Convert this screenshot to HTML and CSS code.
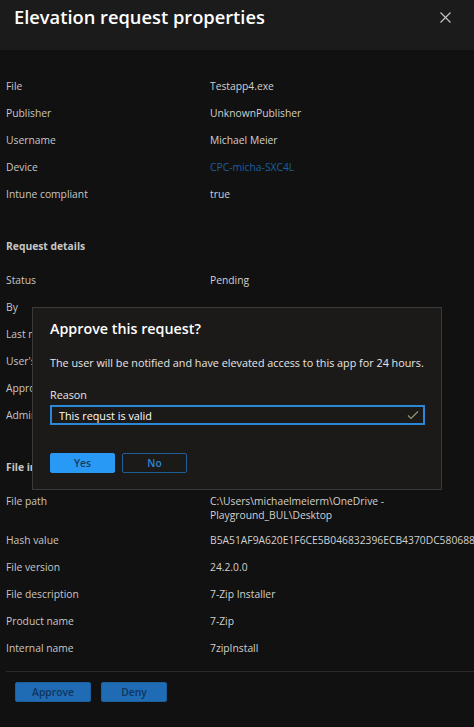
FILE: index.html
```html
<!DOCTYPE html>
<html lang="en">
<head>
    <meta charset="UTF-8">
    <title>Elevation request properties</title>
    <link rel="stylesheet" href="styles.css">
</head>
<body>
    <header class="panel-header">
        <h1>Elevation request properties</h1>
        <button class="close-btn" aria-label="Close">
            <svg width="11" height="11" viewBox="0 0 11 11"><path d="M0.5 0.5L10.5 10.5M10.5 0.5L0.5 10.5" stroke="#c8c8c8" stroke-width="1.1"/></svg>
        </button>
    </header>
    <main class="panel-body">
        <div class="row"><span class="label">File</span><span class="value">Testapp4.exe</span></div>
        <div class="row"><span class="label">Publisher</span><span class="value">UnknownPublisher</span></div>
        <div class="row"><span class="label">Username</span><span class="value">Michael Meier</span></div>
        <div class="row"><span class="label">Device</span><a class="value link">CPC-micha-SXC4L</a></div>
        <div class="row"><span class="label">Intune compliant</span><span class="value">true</span></div>

        <h2 class="section-title">Request details</h2>
        <div class="row"><span class="label">Status</span><span class="value">Pending</span></div>
        <div class="row"><span class="label">By</span><span class="value"></span></div>
        <div class="row"><span class="label">Last modified</span><span class="value"></span></div>
        <div class="row"><span class="label">User's justification</span><span class="value"></span></div>
        <div class="row"><span class="label">Approver</span><span class="value"></span></div>
        <div class="row"><span class="label">Admin comment</span><span class="value"></span></div>

        <h2 class="section-title">File info</h2>
        <div class="row row-tall"><span class="label">File path</span><span class="value">C:\Users\michaelmeierm\OneDrive -<br>Playground_BUL\Desktop</span></div>
        <div class="row"><span class="label">Hash value</span><span class="value">B5A51AF9A620E1F6CE5B046832396ECB4370DC5806885E</span></div>
        <div class="row"><span class="label">File version</span><span class="value">24.2.0.0</span></div>
        <div class="row"><span class="label">File description</span><span class="value">7-Zip Installer</span></div>
        <div class="row"><span class="label">Product name</span><span class="value">7-Zip</span></div>
        <div class="row"><span class="label">Internal name</span><span class="value">7zipInstall</span></div>
    </main>
    <footer class="panel-footer">
        <button class="btn btn-muted approve">Approve</button>
        <button class="btn btn-muted deny">Deny</button>
    </footer>

    <div class="dialog">
        <h3>Approve this request?</h3>
        <p>The user will be notified and have elevated access to this app for 24 hours.</p>
        <label class="field-label">Reason</label>
        <div class="text-field">
            <span>This requst is valid</span>
            <svg width="12" height="10" viewBox="0 0 12 10"><path d="M1 5.5L4 8.5L11 1.5" fill="none" stroke="#8e9a72" stroke-width="1.2"/></svg>
        </div>
        <div class="dialog-actions">
            <button class="btn btn-primary">Yes</button>
            <button class="btn btn-outline">No</button>
        </div>
    </div>
</body>
</html>
```

FILE: styles.css
```css
body {
    margin: 0;
    background: #111111;
    color: #d0d0d0;
    font-family: "Open Sans", "Noto Sans", sans-serif;
    font-size: 10.3px;
    width: 474px;
    height: 727px;
    overflow: hidden;
    position: relative;
}

.panel-header {
    height: 50px;
    background: #1b1b1b;
    display: flex;
    align-items: flex-start;
    justify-content: space-between;
}

.panel-header h1 {
    margin: 0;
    padding: 3px 0 0 14px;
    font-size: 18.3px;
    font-weight: 600;
    color: #ffffff;
    line-height: 28px;
}

.close-btn {
    background: none;
    border: none;
    padding: 0;
    margin: 12px 23px 0 0;
    width: 11px;
    height: 11px;
    display: flex;
}

.panel-body {
    padding: 22px 0 0 6px;
    overflow: hidden;
}

.row {
    display: flex;
    padding: 6.5px 0;
    line-height: 14px;
}

.row-tall {
    padding-bottom: 5px;
}

.label {
    width: 204px;
    flex-shrink: 0;
    color: #c8c6c4;
    white-space: nowrap;
}

.value {
    white-space: nowrap;
    color: #d2d0ce;
}

.link {
    color: #1c5f9e;
}

.section-title {
    margin: 26px 0 6px;
    font-size: 10.3px;
    font-weight: 700;
    line-height: 27px;
    color: #c8c6c4;
}

.panel-footer {
    margin: 9px 0 0 6px;
    border-top: 1px solid #2c2a29;
    padding: 10px 0 0 9px;
    display: flex;
    gap: 10px;
}

.btn {
    font-family: inherit;
    font-size: 10.3px;
    font-weight: 600;
    height: 20px;
    padding: 0;
    border-radius: 2px;
}

.btn-muted {
    background: #1f6cb5;
    border: 1px solid #1d5e9c;
    color: #10355c;
}

.approve { width: 76px; }
.deny { width: 66px; }

.dialog {
    position: absolute;
    left: 32px;
    top: 307px;
    width: 391px;
    height: 181px;
    padding: 0 0 0 17px;
    background: #1b1a19;
    border: 1px solid #3b3a39;
}

.dialog h3 {
    margin: 10px 0 0;
    font-size: 14.3px;
    font-weight: 600;
    line-height: 22px;
    color: #ffffff;
}

.dialog p {
    margin: 16px 0 0;
    font-size: 10.8px;
    line-height: 14px;
    color: #e6e6e6;
}

.field-label {
    display: block;
    margin-top: 18px;
    font-size: 10.8px;
    line-height: 14px;
    color: #e6e6e6;
}

.text-field {
    margin-top: 3px;
    height: 16px;
    border: 2px solid #2b88d8;
    display: flex;
    align-items: center;
    justify-content: space-between;
    padding: 0 0 0 7px;
    width: 364px;
    font-size: 10.8px;
    color: #ffffff;
}

.text-field svg {
    margin-right: 4px;
}

.dialog-actions {
    margin-top: 28px;
    display: flex;
    gap: 7px;
}

.btn-primary {
    width: 65px;
    background: #2899f5;
    border: 1px solid #2899f5;
    color: #1a3a5e;
}

.btn-outline {
    width: 65px;
    background: #1b1a19;
    border: 1px solid #1f5d99;
    color: #2b88d8;
}
```
